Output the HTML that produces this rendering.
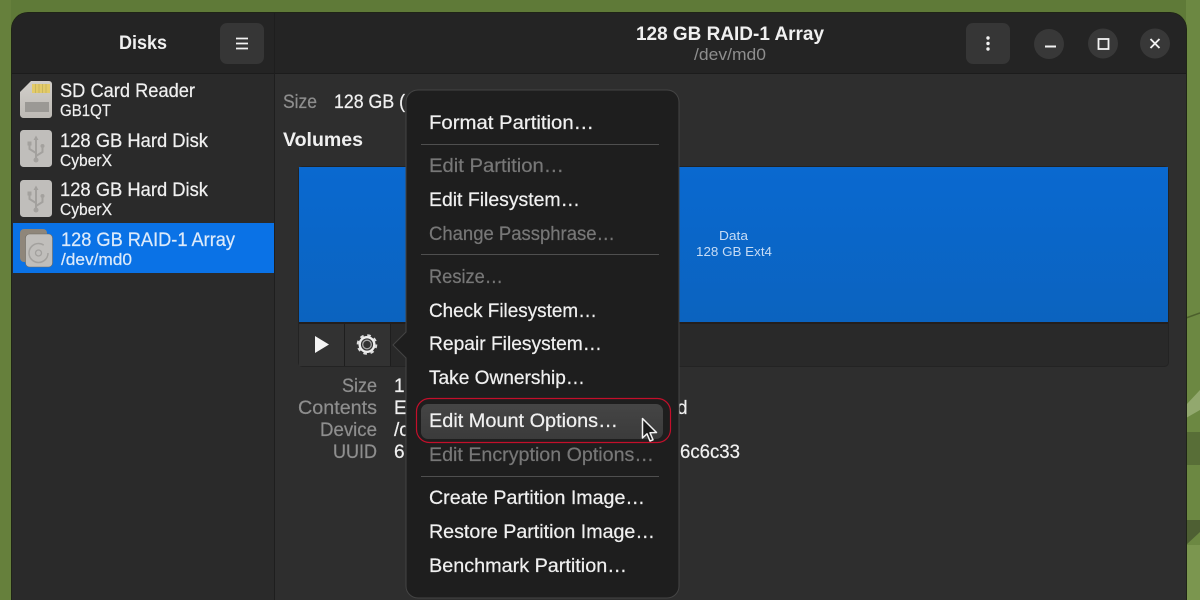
<!DOCTYPE html>
<html><head><meta charset="utf-8"><title>Disks</title>
<style>
html,body{margin:0;padding:0;width:1200px;height:600px;overflow:hidden;background:#62803a}
svg{display:block}
text{font-family:"Liberation Sans",sans-serif;font-size:19px;fill:#f0f0f0;stroke:#f0f0f0;stroke-width:.22px}
.b{font-weight:bold;stroke-width:0}
.g{fill:#8e8e8e;stroke:#8e8e8e}
.d{fill:#777;stroke:#777}
.s{font-size:17px}
.x{font-size:13px;fill:#c6dcf5;stroke-width:0}
.w{fill:#dceafa;stroke:#dceafa}
</style></head><body>
<svg width="1200" height="600" viewBox="0 0 1200 600" xmlns="http://www.w3.org/2000/svg">
<defs>
<linearGradient id="blue" x1="0" y1="0" x2="0" y2="1"><stop offset="0" stop-color="#0a69d0"/><stop offset="1" stop-color="#0b63bf"/></linearGradient>
<linearGradient id="hl" x1="0" y1="0" x2="0" y2="1"><stop offset="0" stop-color="#454545"/><stop offset="1" stop-color="#3b3b3b"/></linearGradient>
<linearGradient id="sd" x1="0" y1="0" x2="0" y2="1"><stop offset="0" stop-color="#d2cfca"/><stop offset="1" stop-color="#bdbab5"/></linearGradient>
</defs>
<!-- wallpaper -->
<rect width="1200" height="600" fill="#5f7a38"/>
<rect x="0" y="0" width="11" height="600" fill="#66803c"/>
<rect x="1186" y="0" width="14" height="600" fill="#6c8842"/>
<path d="M1186 318L1200 313" stroke="#4c5f2c" stroke-width="1.500"/>
<polygon points="1186,405 1200,390 1200,410 1186,418" fill="#92a86e"/>
<rect x="1186" y="432" width="14" height="33" fill="#586e37"/>
<polygon points="1186,520 1200,520 1200,532 1186,545" fill="#4e5f33"/>
<rect x="1186" y="545" width="14" height="55" fill="#7b964f"/>
<!-- window -->
<path d="M11 600V29a17 17 0 0 1 17-17H1170a17 17 0 0 1 17 17V600Z" fill="#1f2417"/>
<path d="M12 600V29a16 16 0 0 1 16-16H1170a16 16 0 0 1 16 16V600Z" fill="#2e2e2e"/>
<path d="M12 600V29a16 16 0 0 1 16-16H274V600Z" fill="#2a2a2a"/>
<path d="M12 73V29a16 16 0 0 1 16-16H1170a16 16 0 0 1 16 16V73Z" fill="#242424"/>
<rect x="12" y="73" width="1174" height="1" fill="#1c1c1c"/>
<rect x="274" y="13" width="1" height="587" fill="#1e1e1e"/>
<!-- header left -->
<text class="b" x="119" y="49" textLength="48" lengthAdjust="spacingAndGlyphs">Disks</text>
<rect x="220" y="23" width="44" height="41" rx="7" fill="#363636"/>
<path d="M236 38.500H248M236 43.500H248M236 48.500H248" stroke="#f2f2f2" stroke-width="1.700" fill="none"/>
<!-- header right -->
<text class="b" x="636" y="40" textLength="188" lengthAdjust="spacingAndGlyphs">128 GB RAID-1 Array</text>
<text class="g" x="694" y="60" textLength="72" lengthAdjust="spacingAndGlyphs" style="font-size:17px;stroke-width:0">/dev/md0</text>
<rect x="966" y="23" width="44" height="41" rx="7" fill="#363636"/>
<circle cx="988" cy="38" r="1.700" fill="#f2f2f2"/><circle cx="988" cy="43.500" r="1.700" fill="#f2f2f2"/><circle cx="988" cy="49" r="1.700" fill="#f2f2f2"/>
<circle cx="1049" cy="44" r="15" fill="#383838"/>
<rect x="1045" y="45.500" width="11" height="2" fill="#f2f2f2"/>
<circle cx="1103" cy="43.500" r="15" fill="#383838"/>
<rect x="1098.500" y="39" width="10" height="10" fill="none" stroke="#f2f2f2" stroke-width="1.800"/>
<circle cx="1155" cy="43.500" r="15" fill="#383838"/>
<path d="M1150.500 39L1159.500 48M1159.500 39L1150.500 48" stroke="#f2f2f2" stroke-width="1.900"/>
<!-- selected row -->
<rect x="13" y="223" width="261" height="50" fill="#0a72e6"/>
<!-- sidebar icons -->
<path d="M31 81H49a3 3 0 0 1 3 3V115a3 3 0 0 1-3 3H24a4 4 0 0 1-4-3V92Z" fill="url(#sd)"/>
<rect x="32" y="84" width="18" height="9" fill="#e3cb68"/>
<path d="M35.500 84v9M39 84v9M42.500 84v9M46 84v9" stroke="#c9b65f" stroke-width="1"/>
<rect x="25" y="102" width="24" height="10" fill="#9b9995"/>
<rect x="20" y="130" width="32" height="37" rx="3.500" fill="#c0bebb"/>
<path d="M36 137V160M36 153L29.500 149V145M36 156L42.500 152V148" stroke="#a3a19e" stroke-width="2" fill="none"/>
<path d="M33.500 140L36 135.500L38.500 140Z" fill="#a3a19e"/>
<circle cx="36" cy="160" r="2.500" fill="#a3a19e"/>
<rect x="27.500" y="141.500" width="4" height="4" fill="#a3a19e"/>
<circle cx="42.500" cy="146" r="2" fill="#a3a19e"/>
<g transform="translate(0,50)">
<rect x="20" y="130" width="32" height="37" rx="3.500" fill="#c0bebb"/>
<path d="M36 137V160M36 153L29.500 149V145M36 156L42.500 152V148" stroke="#a3a19e" stroke-width="2" fill="none"/>
<path d="M33.500 140L36 135.500L38.500 140Z" fill="#a3a19e"/>
<circle cx="36" cy="160" r="2.500" fill="#a3a19e"/>
<rect x="27.500" y="141.500" width="4" height="4" fill="#a3a19e"/>
<circle cx="42.500" cy="146" r="2" fill="#a3a19e"/>
</g>
<rect x="20" y="229" width="27" height="33" rx="4" fill="#8f867a"/>
<rect x="25.500" y="234" width="27" height="33" rx="4" stroke="#6f6a63" stroke-width=".6" fill="#c0bebb"/>
<circle cx="38.500" cy="253" r="9.500" fill="none" stroke="#a3a19e" stroke-width="1.500" stroke-dasharray="50 10"/>
<circle cx="38.500" cy="253" r="3" fill="none" stroke="#a3a19e" stroke-width="1.300"/>
<!-- sidebar text -->
<text x="60" y="97" textLength="135" lengthAdjust="spacingAndGlyphs">SD Card Reader</text>
<text class="s" x="60" y="116" textLength="51" lengthAdjust="spacingAndGlyphs">GB1QT</text>
<text x="60" y="147" textLength="148" lengthAdjust="spacingAndGlyphs">128 GB Hard Disk</text>
<text class="s" x="60" y="166" textLength="52" lengthAdjust="spacingAndGlyphs">CyberX</text>
<text x="60" y="196" textLength="148" lengthAdjust="spacingAndGlyphs">128 GB Hard Disk</text>
<text class="s" x="60" y="215" textLength="52" lengthAdjust="spacingAndGlyphs">CyberX</text>
<text class="w" x="61" y="246" textLength="174" lengthAdjust="spacingAndGlyphs">128 GB RAID-1 Array</text>
<text class="s w" x="61" y="265" textLength="71" lengthAdjust="spacingAndGlyphs">/dev/md0</text>
<!-- content -->
<text class="g" x="283" y="108" textLength="34" lengthAdjust="spacingAndGlyphs">Size</text>
<text x="334" y="108" textLength="71" lengthAdjust="spacingAndGlyphs">128 GB (</text>
<text class="b" x="283" y="146" textLength="80" lengthAdjust="spacingAndGlyphs">Volumes</text>
<rect x="298.500" y="166.500" width="870" height="200" rx="4" fill="#292929" stroke="#232323"/>
<rect x="299" y="167" width="869" height="155" fill="url(#blue)"/>
<rect x="299" y="322" width="869" height="2" fill="#231e1c"/>
<text class="x" x="719" y="240" textLength="29" lengthAdjust="spacingAndGlyphs">Data</text>
<text class="x" x="696" y="256" textLength="76" lengthAdjust="spacingAndGlyphs">128 GB Ext4</text>
<rect x="299" y="324" width="46" height="42" fill="#323232"/>
<rect x="345" y="324" width="46" height="42" fill="#323232"/>
<rect x="344" y="324" width="1" height="42" fill="#1e1e1e"/>
<rect x="390" y="324" width="1" height="42" fill="#1e1e1e"/>
<path d="M315 336L329 344.500L315 353Z" fill="#f4f4f4"/>
<circle cx="367" cy="344.500" r="7.300" fill="none" stroke="#eeeeee" stroke-width="2.400"/>
<circle cx="367" cy="344.500" r="9.300" fill="none" stroke="#dddddd" stroke-width="2" stroke-dasharray="3.600 3.700"/>
<circle cx="367" cy="344.500" r="4.300" fill="none" stroke="#a8a8a8" stroke-width="1.300"/>
<!-- detail labels -->
<text class="g" x="342" y="392" textLength="35" lengthAdjust="spacingAndGlyphs">Size</text>
<text class="g" x="298" y="414" textLength="79" lengthAdjust="spacingAndGlyphs">Contents</text>
<text class="g" x="320" y="436" textLength="57" lengthAdjust="spacingAndGlyphs">Device</text>
<text class="g" x="333" y="458" textLength="44" lengthAdjust="spacingAndGlyphs">UUID</text>
<text x="394" y="392">1</text>
<text x="394" y="414">E</text>
<text x="394" y="436">/c</text>
<text x="394" y="458">6</text>
<text x="677" y="414">d</text>
<text x="680" y="458" textLength="60" lengthAdjust="spacingAndGlyphs">6c6c33</text>
<!-- menu -->
<path d="M393 345L406 332V102a12 12 0 0 1 12-12H667a12 12 0 0 1 12 12V586a12 12 0 0 1-12 12H418a12 12 0 0 1-12-12V358Z" fill="#1e1e1e" stroke="#444444" stroke-width="1"/>
<rect x="421" y="144" width="238" height="1" fill="#4f4f4f"/>
<rect x="421" y="254" width="238" height="1" fill="#4f4f4f"/>
<rect x="421" y="476" width="238" height="1" fill="#4f4f4f"/>
<rect x="421" y="404" width="242" height="35" rx="7" fill="url(#hl)"/>
<rect x="416.500" y="398.500" width="254" height="44" rx="13" fill="none" stroke="#c40f2b" stroke-width="1.200"/>
<text x="429" y="129" textLength="165" lengthAdjust="spacingAndGlyphs">Format Partition…</text>
<text class="d" x="429" y="172" textLength="135" lengthAdjust="spacingAndGlyphs">Edit Partition…</text>
<text x="429" y="206" textLength="151" lengthAdjust="spacingAndGlyphs">Edit Filesystem…</text>
<text class="d" x="429" y="240" textLength="186" lengthAdjust="spacingAndGlyphs">Change Passphrase…</text>
<text class="d" x="429" y="283" textLength="74" lengthAdjust="spacingAndGlyphs">Resize…</text>
<text x="429" y="317" textLength="168" lengthAdjust="spacingAndGlyphs">Check Filesystem…</text>
<text x="429" y="350" textLength="173" lengthAdjust="spacingAndGlyphs">Repair Filesystem…</text>
<text x="429" y="384" textLength="156" lengthAdjust="spacingAndGlyphs">Take Ownership…</text>
<text x="429" y="427" textLength="189" lengthAdjust="spacingAndGlyphs">Edit Mount Options…</text>
<text class="d" x="429" y="461" textLength="225" lengthAdjust="spacingAndGlyphs">Edit Encryption Options…</text>
<text x="429" y="504" textLength="216" lengthAdjust="spacingAndGlyphs">Create Partition Image…</text>
<text x="429" y="538" textLength="226" lengthAdjust="spacingAndGlyphs">Restore Partition Image…</text>
<text x="429" y="572" textLength="198" lengthAdjust="spacingAndGlyphs">Benchmark Partition…</text>
<!-- cursor -->
<path d="M642.500 418.500V438L647 433.800L650 441L653 439.800L650 432.800L656.500 432.500Z" fill="#1a1a1a" stroke="#f2f2f2" stroke-width="1.500" stroke-linejoin="round"/>
</svg>
</body></html>
